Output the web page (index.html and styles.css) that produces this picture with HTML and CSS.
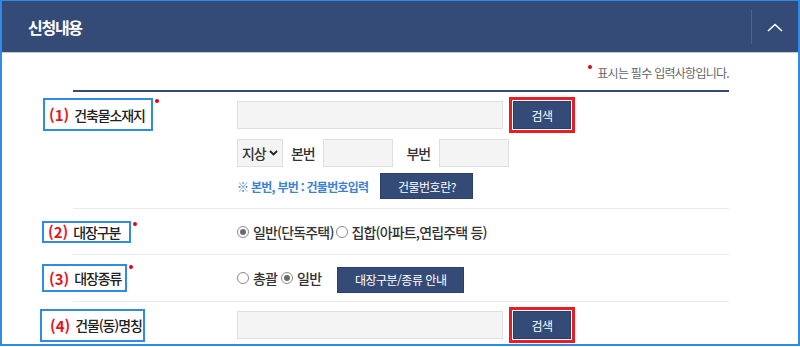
FILE: index.html
```html
<!DOCTYPE html>
<html lang="ko">
<head>
<meta charset="utf-8">
<title>신청내용</title>
<link rel="stylesheet" href="styles.css">
</head>
<body>
<div class="frame">
  <div class="head">
    <h2 class="title">신청내용</h2>
    <div class="toggle">
      <svg width="16" height="9" viewBox="0 0 16 9"><polyline points="1,8 8,1.5 15,8" fill="none" stroke="#fff" stroke-width="1.6"/></svg>
    </div>
  </div>
  <div class="note"><span class="req-dot"></span>표시는 필수 입력사항입니다.</div>
  <div class="table">
    <div class="row row1">
      <div class="lab"><span class="box box1"><b>(1)</b> 건축물소재지<i class="dot"></i></span></div>
      <div class="val stack">
        <div class="line">
          <span class="inp wide"></span>
          <span class="srch"><span class="btn b-srch">검색</span></span>
        </div>
        <div class="line">
          <span class="sel">지상<svg width="9" height="6" viewBox="0 0 9 6"><polyline points="1,1 4.5,4.5 8,1" fill="none" stroke="#222" stroke-width="1.8"/></svg></span>
          <span class="txt t1">본번</span>
          <span class="inp small"></span>
          <span class="txt t2">부번</span>
          <span class="inp small"></span>
        </div>
        <div class="line">
          <span class="hint">※ 본번, 부번 : 건물번호입력</span>
          <span class="btn b-num">건물번호란?</span>
        </div>
      </div>
    </div>
    <div class="row row2">
      <div class="lab"><span class="box box2"><b>(2)</b> 대장구분<i class="dot"></i></span></div>
      <div class="val">
        <span class="radio on"></span><span class="rt">일반(단독주택)</span>
        <span class="radio"></span><span class="rt">집합(아파트,연립주택 등)</span>
      </div>
    </div>
    <div class="row row3">
      <div class="lab"><span class="box box3"><b>(3)</b> 대장종류<i class="dot"></i></span></div>
      <div class="val">
        <span class="radio"></span><span class="rt sp">총괄</span>
        <span class="radio on"></span><span class="rt">일반</span>
        <span class="btn b-guide">대장구분/종류 안내</span>
      </div>
    </div>
    <div class="row row4">
      <div class="lab"><span class="box box4"><b>(4)</b> 건물(동)명칭</span></div>
      <div class="val">
        <span class="inp wide"></span>
        <span class="srch"><span class="btn b-srch">검색</span></span>
      </div>
    </div>
  </div>
</div>
</body>
</html>
```

FILE: styles.css
```css
* { box-sizing: border-box; }
html, body { margin: 0; padding: 0; background: #fff; }
body {
  font-family: "Noto Sans CJK KR", "Noto Sans", sans-serif;
  color: #333;
  letter-spacing: -0.07em;
}
.frame {
  width: 800px;
  height: 346px;
  border: 2px solid #2f8ae8;
  border-top-width: 1px;
  overflow: hidden;
}
.head {
  height: 52px;
  background: #354b77;
  border-bottom: 1px solid #c3c9d5;
  display: flex;
  align-items: center;
  justify-content: space-between;
}
.title {
  margin: 0 0 0 26px;
  font-size: 16px;
  font-weight: 700;
  color: #fff;
  letter-spacing: -0.08em;
}
.toggle {
  width: 47px;
  height: 34px;
  border-left: 1px solid #4f6392;
  display: flex;
  align-items: center;
  justify-content: center;
  padding-top: 1px;
}
.note {
  height: 37px;
  display: flex;
  justify-content: flex-end;
  align-items: center;
  padding-right: 69px;
  font-size: 12px;
  color: #666;
  padding-top: 2px;
  letter-spacing: -0.06em;
}
.req-dot {
  width: 4px;
  height: 4px;
  border-radius: 50%;
  background: #e60012;
  margin-right: 5px;
  align-self: flex-start;
  margin-top: 10px;
}
.table {
  margin: 0 69px 0 71px;
  border-top: 2px solid #354b77;
}
.row {
  display: grid;
  grid-template-columns: 164px 1fr;
  border-bottom: 1px solid #ebebeb;
}
.row1 { padding: 9px 0; height: 117px; }
.row2 { height: 46px; align-items: center; }
.row3 { height: 47px; align-items: center; }
.row4 { height: 46px; align-items: center; border-bottom: 0; }
.lab { position: relative; }
.box {
  position: relative;
  display: flex;
  align-items: center;
  border: 2px solid #2f8ae8;
  font-size: 14px;
  font-weight: 500;
  color: #222;
  white-space: nowrap;
  letter-spacing: -0.08em;
}
.box b { color: #e8141b; font-size: 15px; margin-right: 5px; letter-spacing: 0; font-weight: 700; }
.box1 { width: 110px; height: 33px; margin: -3px 0 0 -30px; padding-left: 4px; }
.box2 { width: 89px; height: 22px; margin: 0 0 0 -31px; padding-left: 4px; }
.box3 { width: 85px; height: 28px; margin: 0 0 0 -31px; padding-left: 5px; }
.box4 { width: 105px; height: 33px; margin: 0 0 0 -33px; padding-left: 8px; }
.dot {
  position: absolute;
  right: -8px;
  top: -1px;
  width: 4px;
  height: 4px;
  border-radius: 50%;
  background: #e60012;
}
.val { display: flex; align-items: center; font-size: 14px; }
.stack { flex-direction: column; align-items: flex-start; }
.line { display: flex; align-items: center; }
.line + .line { margin-top: 10px; }
.line:last-child { margin-top: 6px; }
.inp {
  display: block;
  height: 28px;
  background: #f4f4f4;
  border: 1px solid #dfdfdf;
}
.wide { width: 266px; }
.small { width: 70px; }
.srch {
  margin-left: 10px;
  outline: 3px solid #ea1c24;
  outline-offset: 1px;
  display: flex;
}
.btn {
  display: inline-flex;
  align-items: center;
  justify-content: center;
  background: #354b77;
  color: #fff;
  font-size: 12px;
  border: 1px solid #2c3f66;
  letter-spacing: -0.04em;
}
.b-srch { width: 58px; height: 28px; }
.b-num { width: 93px; height: 26px; margin-left: 12px; }
.b-guide { width: 127px; height: 26px; margin-left: 14px; margin-top: 3px; }
.sel {
  width: 46px;
  height: 28px;
  background: #f4f4f4;
  border: 1px solid #dfdfdf;
  display: flex;
  align-items: center;
  padding-left: 4px;
  gap: 3px;
  font-size: 14px;
  font-weight: 500;
  color: #333;
}
.txt { font-size: 14px; color: #333; font-weight: 500; }
.t1 { margin: 0 8px; }
.t2 { margin: 0 9px 0 14px; }
.hint { font-size: 12px; color: #3b82d6; font-weight: 700; letter-spacing: -0.06em; }
.radio {
  width: 12px;
  height: 12px;
  border-radius: 50%;
  border: 1px solid #8a8a8a;
  background: #fff;
  display: inline-flex;
  align-items: center;
  justify-content: center;
  margin-right: 4px;
  flex: none;
}
.radio.on::after {
  content: "";
  width: 6px;
  height: 6px;
  border-radius: 50%;
  background: #6a6a6a;
}
.rt { margin-right: 2px; color: #333; font-weight: 500; letter-spacing: -0.06em; }
.rt.sp { margin-right: 4px; }
.row2 .val { margin-top: 1px; }
```
